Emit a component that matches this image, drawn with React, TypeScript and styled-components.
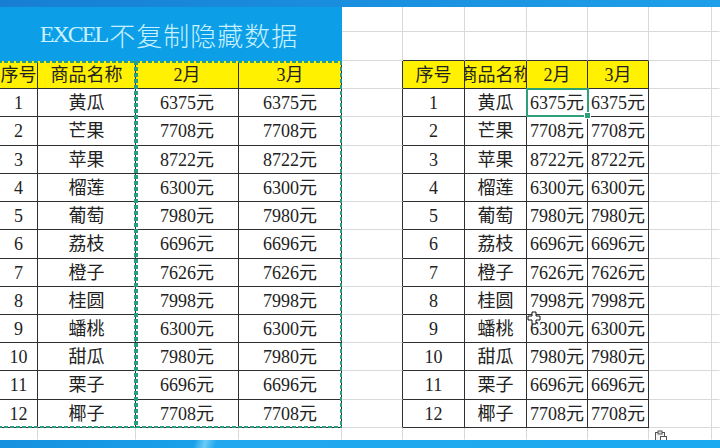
import React from 'react';
import styled, { createGlobalStyle } from 'styled-components';

const GlobalStyle = createGlobalStyle`
  html, body { margin: 0; padding: 0; background: #fff; }
  body {
    width: 720px; height: 448px; overflow: hidden;
    font-family: "Liberation Serif", "Noto Sans CJK SC", serif;
  }
`;

const COLS = [38, 98, 103, 103, 61, 62, 62, 61, 61, 63];
const TABLE_ROWS = [28, 28, 29, 28, 28, 28, 29, 28, 28, 28, 28, 29, 28];

const HEAD = ['序号', '商品名称', '2月', '3月'];
const NAMES = ['黄瓜', '芒果', '苹果', '榴莲', '葡萄', '荔枝', '橙子', '桂圆', '蟠桃', '甜瓜', '栗子', '椰子'];
const VALUES = [6375, 7708, 8722, 6300, 7980, 6696, 7626, 7998, 6300, 7980, 6696, 7708];

const Page = styled.div`
  position: relative;
  width: 720px;
  height: 448px;
  display: flex;
  flex-direction: column;
  overflow: hidden;
  background: #fff;
`;

const TopBar = styled.div`
  height: 7px;
  flex: none;
  background: linear-gradient(90deg, #177fd2 0%, #1a8fdf 50%, #1e9fe9 100%);
`;

const BottomBar = styled.div`
  height: 8px;
  flex: none;
  position: relative;
  z-index: 3;
  background: linear-gradient(105deg, #1590df 0%, #1aa0e9 27%, #6ccbf5 28.5%, #22a8ee 30%, #1ba9ef 100%);
`;

const Sheet = styled.div`
  flex: 1;
  display: grid;
  grid-template-columns: ${COLS.map((c) => `${c}px`).join(' ')} 1fr;
  grid-template-rows: 25px 29px ${TABLE_ROWS.map((r) => `${r}px`).join(' ')} 1fr;
`;

type Line = 'light' | 'dark' | 'none';
type Tone = 'plain' | 'body' | 'head';

const lineColor = (l: Line) => (l === 'dark' ? '#2f2f2f' : l === 'light' ? '#d9d9d9' : 'transparent');

const Cell = styled.div<{ $c: number; $r: number; $right: Line; $bottom: Line; $tone: Tone }>`
  grid-column: ${(p) => p.$c};
  grid-row: ${(p) => p.$r};
  box-sizing: border-box;
  border-right: 1px solid ${(p) => lineColor(p.$right)};
  border-bottom: 1px solid ${(p) => lineColor(p.$bottom)};
  background: ${(p) => (p.$tone === 'head' ? '#fff100' : '#fff')};
  display: flex;
  align-items: center;
  justify-content: center;
  overflow: hidden;
  white-space: nowrap;
  font-size: 18px;
  color: #222;
  line-height: 1;
  min-width: 0;
`;

const CellText = styled.span`
  flex: none;
`;

const Title = styled.div`
  grid-column: 1 / 5;
  grid-row: 1 / 3;
  background: #0c9fe8;
  color: #c8f1ff;
  display: flex;
  align-items: center;
  justify-content: center;
  padding-right: 4px;
  white-space: nowrap;
`;

const TitleLatin = styled.span`
  font-family: "Liberation Serif", serif;
  font-size: 24px;
  letter-spacing: -2px;
  margin-right: 2px;
`;

const TitleCjk = styled.span`
  font-family: "Noto Sans CJK SC", sans-serif;
  font-size: 26px;
  letter-spacing: 1px;
  font-weight: 300;
`;

const dash = '#2a9e82';

const Marquee = styled.div<{ $cols: string; $bleedLeft?: boolean }>`
  grid-column: ${(p) => p.$cols};
  grid-row: 3 / 16;
  z-index: 2;
  pointer-events: none;
  margin-left: ${(p) => (p.$bleedLeft ? '-2px' : '0')};
  background:
    repeating-linear-gradient(90deg, ${dash} 0 4px, transparent 4px 6px) top left / 100% 2px no-repeat,
    repeating-linear-gradient(90deg, ${dash} 0 4px, transparent 4px 6px) bottom left / 100% 2px no-repeat,
    repeating-linear-gradient(180deg, ${dash} 0 4px, transparent 4px 6px) top left / 2px 100% no-repeat,
    repeating-linear-gradient(180deg, ${dash} 0 4px, transparent 4px 6px) top right / 2px 100% no-repeat;
`;

const ActiveCell = styled.div`
  grid-column: 8;
  grid-row: 4;
  margin: -1px -1px 0 -1px;
  border: 2px solid #2f9f78;
  position: relative;
  z-index: 2;
  pointer-events: none;
  &::after {
    content: '';
    position: absolute;
    right: -4px;
    bottom: -4px;
    width: 5px;
    height: 5px;
    background: #2f9f78;
    border: 1px solid #fff;
  }
`;

const Cursor = styled.svg`
  position: absolute;
  left: 527px;
  top: 311px;
  z-index: 4;
`;

const PasteIcon = styled.svg`
  position: absolute;
  left: 654px;
  top: 430px;
  z-index: 2;
`;

function cellInfo(r: number, c: number) {
  const inLeft = r >= 2 && r <= 14 && c >= 0 && c <= 3;
  const inRight = r >= 2 && r <= 14 && c >= 5 && c <= 8;
  let right: Line = 'light';
  let bottom: Line = 'light';
  if (inLeft || inRight || (c === 4 && r >= 2 && r <= 14)) right = 'dark';
  if (inLeft || inRight || (r === 1 && c >= 5 && c <= 8)) bottom = 'dark';
  if (r === 15) bottom = 'none';
  if (c === 10) right = 'none';
  let text = '';
  let tone: Tone = 'plain';
  if (inLeft || inRight) {
    const k = inLeft ? c : c - 5;
    if (r === 2) {
      tone = 'head';
      text = HEAD[k];
    } else {
      tone = 'body';
      const i = r - 3;
      text = k === 0 ? String(i + 1) : k === 1 ? NAMES[i] : `${VALUES[i]}元`;
    }
  }
  return { right, bottom, text, tone };
}

export default function App() {
  const cells: React.ReactNode[] = [];
  for (let r = 0; r < 16; r++) {
    for (let c = 0; c < 11; c++) {
      if (r <= 1 && c <= 3) continue;
      const info = cellInfo(r, c);
      cells.push(
        <Cell key={`${r}-${c}`} $c={c + 1} $r={r + 1} $right={info.right} $bottom={info.bottom} $tone={info.tone}>
          {info.text && <CellText>{info.text}</CellText>}
        </Cell>
      );
    }
  }
  return (
    <Page>
      <GlobalStyle />
      <TopBar />
      <Sheet>
        <Title>
          <TitleLatin>EXCEL</TitleLatin>
          <TitleCjk>不复制隐藏数据</TitleCjk>
        </Title>
        {cells}
        <Marquee $cols="1 / 3" $bleedLeft />
        <Marquee $cols="3 / 5" />
        <ActiveCell />
      </Sheet>
      <BottomBar />
      <Cursor width="14" height="14" viewBox="0 0 14 14">
        <path d="M5 1h4v4h4v4H9v4H5V9H1V5h4z" fill="#fff" stroke="#111" strokeWidth="1" />
      </Cursor>
      <PasteIcon width="14" height="14" viewBox="0 0 14 14">
        <rect x="1.5" y="2.5" width="9" height="10" fill="#f4f4f4" stroke="#555" />
        <rect x="4" y="1" width="4" height="3" fill="#ddd" stroke="#555" />
        <rect x="6.5" y="6.5" width="6" height="6" fill="#fff" stroke="#555" />
      </PasteIcon>
    </Page>
  );
}
